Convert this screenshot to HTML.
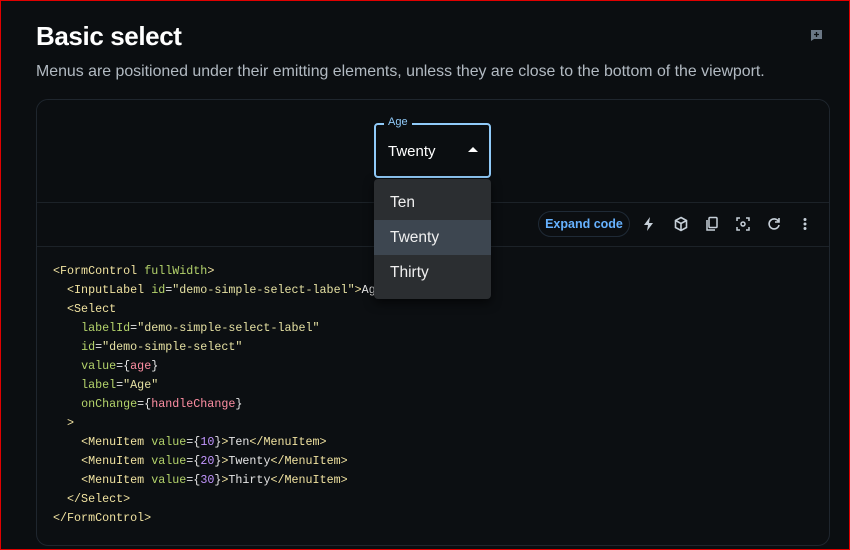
<!DOCTYPE html>
<html><head><meta charset="utf-8"><style>
*{box-sizing:border-box;margin:0;padding:0}
html,body{width:850px;height:550px;overflow:hidden;background:#0b0e11}
body{position:relative;font-family:"Liberation Sans",sans-serif;}
.frame{position:absolute;left:0;top:0;width:850px;height:550px;border:1px solid #e00000;pointer-events:none}
.t{position:absolute;left:36px;top:21px;font-size:26px;font-weight:bold;color:#fff;letter-spacing:-0.4px}
.d{position:absolute;left:36px;top:63px;font-size:15.9px;color:#b2bac2;letter-spacing:0}
.box{position:absolute;left:36px;top:99px;width:794px;height:447px;border:1px solid #1f262e;border-radius:12px;overflow:hidden;background:#0c0f12}
.demo{position:absolute;left:0;top:0;width:100%;height:103px;border-bottom:1px solid #1c2228;background:#0b0e11}
.tool{position:absolute;left:0;top:103px;width:100%;height:44px;border-bottom:1px solid #1c2228;background:#0b0e11}
.code{position:absolute;left:16px;top:162px;font-family:"Liberation Mono",monospace;font-size:11.7px;line-height:19px;color:#e6e6e6;white-space:pre}
.g{color:#f0e2a0}.a{color:#b4d36b}.s{color:#e5e0a2}.v{color:#ff8fa3}.n{color:#c396ff}
.sel{position:absolute;left:374px;top:123px;width:117px;height:55px;border:2px solid #90caf9;border-radius:4px}
.lab{position:absolute;left:384px;top:116px;font-size:11px;color:#90caf9;background:#0b0e11;padding:0 4px}
.val{position:absolute;left:388px;top:143px;font-size:15px;color:#fff}
.arr{position:absolute;left:468px;top:147px;width:0;height:0;border-left:5px solid transparent;border-right:5px solid transparent;border-bottom:5px solid #fff}
.menu{position:absolute;left:374px;top:179px;width:117px;height:120px;background:#2b2e31;border-radius:4px;box-shadow:0 4px 10px rgba(0,0,0,.6)}
.mi{height:35px;line-height:35px;padding-left:16px;font-size:15.5px;color:#f0f0f0}
.btn{position:absolute;left:538px;top:211px;width:92px;height:26px;border:1px solid #1f2a36;border-radius:13px;color:#66b2ff;font-size:12.5px;font-weight:bold;text-align:center;line-height:24px}
.ic{position:absolute;top:216px}
</style></head><body>
<div class="t">Basic select</div>
<div class="d">Menus are positioned under their emitting elements, unless they are close to the bottom of the viewport.</div>
<svg style="position:absolute;left:810px;top:29px" width="13" height="13" viewBox="0 0 13 13"><path d="M1 1h11v9H4l-3 2z" fill="#6b7785"/><path d="M6.5 3v5M4 5.5h5" stroke="#0b0e11" stroke-width="1.3"/></svg>
<div class="box">
<div class="demo"></div><div class="tool"></div>
<div class="code"><span class="g">&lt;FormControl</span> <span class="a">fullWidth</span><span class="g">&gt;</span>
  <span class="g">&lt;InputLabel</span> <span class="a">id</span>=<span class="s">"demo-simple-select-label"</span><span class="g">&gt;</span>Age<span class="g">&lt;/InputLabel&gt;</span>
  <span class="g">&lt;Select</span>
    <span class="a">labelId</span>=<span class="s">"demo-simple-select-label"</span>
    <span class="a">id</span>=<span class="s">"demo-simple-select"</span>
    <span class="a">value</span>={<span class="v">age</span>}
    <span class="a">label</span>=<span class="s">"Age"</span>
    <span class="a">onChange</span>={<span class="v">handleChange</span>}
  <span class="g">&gt;</span>
    <span class="g">&lt;MenuItem</span> <span class="a">value</span>={<span class="n">10</span>}<span class="g">&gt;</span>Ten<span class="g">&lt;/MenuItem&gt;</span>
    <span class="g">&lt;MenuItem</span> <span class="a">value</span>={<span class="n">20</span>}<span class="g">&gt;</span>Twenty<span class="g">&lt;/MenuItem&gt;</span>
    <span class="g">&lt;MenuItem</span> <span class="a">value</span>={<span class="n">30</span>}<span class="g">&gt;</span>Thirty<span class="g">&lt;/MenuItem&gt;</span>
  <span class="g">&lt;/Select&gt;</span>
<span class="g">&lt;/FormControl&gt;</span></div>
</div>
<div class="btn">Expand code</div>
<svg class="ic" style="left:642px" width="14" height="16" viewBox="0 0 14 16"><path d="M8 1L2 9h4l-1 6 6-8H7z" fill="#c7d0d9"/></svg>
<svg class="ic" style="left:673px" width="16" height="16" viewBox="0 0 16 16" fill="none" stroke="#c7d0d9" stroke-width="1.6"><path d="M8 1.5l5.5 3v7L8 14.5l-5.5-3v-7z M2.5 4.5L8 7.5l5.5-3 M8 7.5v7"/></svg>
<svg class="ic" style="left:705px" width="14" height="16" viewBox="0 0 14 16" fill="none" stroke="#c7d0d9" stroke-width="1.5"><rect x="4" y="1.5" width="8" height="10" rx="1"/><path d="M2 4v10h8"/></svg>
<svg class="ic" style="left:736px" width="14" height="16" viewBox="0 0 14 16" fill="none" stroke="#c7d0d9" stroke-width="1.5"><path d="M1 5V2h3M10 2h3v3M13 11v3h-3M4 14H1v-3"/><circle cx="7" cy="8" r="2"/></svg>
<svg class="ic" style="left:767px" width="14" height="16" viewBox="0 0 14 16" fill="none" stroke="#c7d0d9" stroke-width="1.6"><path d="M11.5 5.5A5 5 0 1 0 12 9"/><path d="M12 2v4H8" /></svg>
<svg class="ic" style="left:802px" width="6" height="16" viewBox="0 0 6 16" fill="#c7d0d9"><circle cx="3" cy="3.5" r="1.5"/><circle cx="3" cy="8" r="1.5"/><circle cx="3" cy="12.5" r="1.5"/></svg>
<div class="sel"></div><div class="lab">Age</div><div class="val">Twenty</div><div class="arr"></div>
<div class="menu"><div style="height:6px"></div><div class="mi">Ten</div><div class="mi" style="background:#3d4650">Twenty</div><div class="mi">Thirty</div></div>
<div class="frame"></div>
</body></html>
